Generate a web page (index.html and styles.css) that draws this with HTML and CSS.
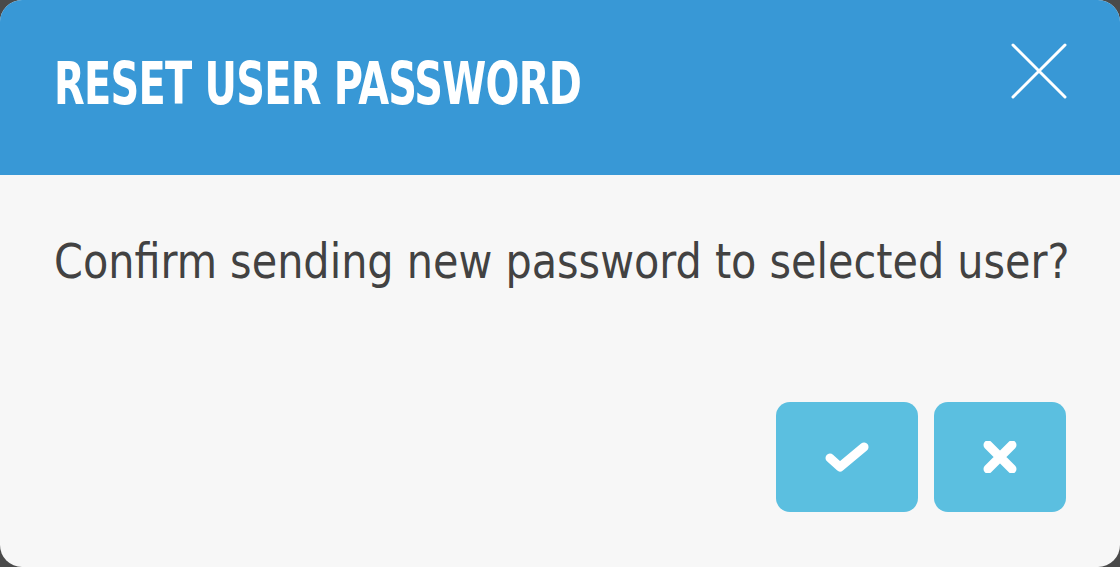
FILE: index.html
```html
<!DOCTYPE html>
<html>
<head>
<meta charset="utf-8">
<link rel="stylesheet" href="styles.css">
</head>
<body>
<div class="modal">
  <div class="modal-header">
    <h1 class="modal-title">RESET USER PASSWORD</h1>
    <button class="close" aria-label="Close">
      <svg width="56" height="56" viewBox="0 0 56 56"><path d="M2 2L54 54M54 2L2 54" stroke="#fff" stroke-width="3" stroke-linecap="round" fill="none"/></svg>
    </button>
  </div>
  <div class="modal-body">
    <p class="message">Confirm sending new password to selected user?</p>
  </div>
  <div class="modal-footer">
    <button class="btn btn-ok" aria-label="Confirm">
      <svg width="44" height="32" viewBox="0 0 44 32"><path d="M5 17L15 26L39 6" stroke="#fff" stroke-width="9" stroke-linecap="round" stroke-linejoin="round" fill="none"/></svg>
    </button>
    <button class="btn btn-cancel" aria-label="Cancel">
      <svg width="36" height="32" viewBox="0 0 36 32"><path d="M6 4L30 28M30 4L6 28" stroke="#fff" stroke-width="9" stroke-linecap="round" fill="none"/></svg>
    </button>
  </div>
</div>
</body>
</html>
```
FILE: styles.css
```css
html, body {
  margin: 0;
  padding: 0;
  width: 1120px;
  height: 567px;
  overflow: hidden;
  background: #4a4a4a;
}
.modal {
  width: 1120px;
  height: 567px;
  border-radius: 22px;
  overflow: hidden;
  background: #f7f7f7;
  display: flex;
  flex-direction: column;
}
.modal-header {
  height: 175px;
  flex: none;
  background: #3898d6;
  display: flex;
  align-items: center;
  justify-content: space-between;
  padding: 0 53px 0 54px;
  box-sizing: border-box;
}
.modal-title {
  margin: -8px 0 0;
  color: #fff;
  font-family: "DejaVu Sans Condensed", "DejaVu Sans", sans-serif;
  font-weight: bold;
  font-size: 58px;
  letter-spacing: -1px;
  line-height: 1;
  transform: scaleX(0.765);
  transform-origin: left center;
  white-space: nowrap;
}
.close {
  border: 0;
  background: transparent;
  padding: 0;
  margin-top: -34px;
  width: 56px;
  height: 56px;
  display: flex;
}
.modal-body {
  flex: 1;
  padding: 0 54px;
}
.message {
  margin: 0;
  padding-top: 58px;
  color: #424242;
  font-family: "DejaVu Sans Condensed", "DejaVu Sans", sans-serif;
  font-size: 48px;
  line-height: 56px;
  transform: scaleX(0.958);
  transform-origin: left center;
  white-space: nowrap;
}
.modal-footer {
  display: flex;
  justify-content: flex-end;
  gap: 16px;
  padding: 0 54px 55px;
}
.btn {
  border: 0;
  padding: 0;
  height: 110px;
  border-radius: 14px;
  background: #5bbfe0;
  display: flex;
  align-items: center;
  justify-content: center;
}
.btn-ok { width: 142px; }
.btn-cancel { width: 132px; }
```
